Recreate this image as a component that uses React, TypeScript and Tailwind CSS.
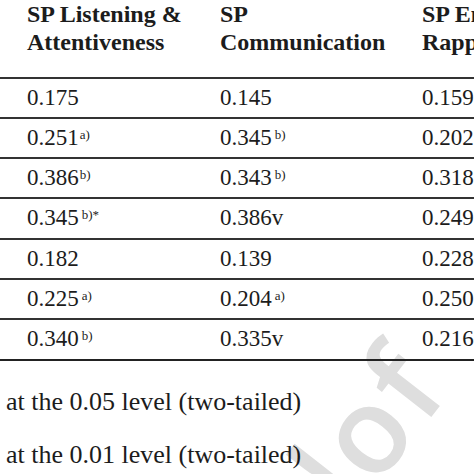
import type { ReactNode } from 'react'

type Cell = { v: string; sup?: string; gap?: boolean }

const ROWS: { h: string; cells: Cell[] }[] = [
  { h: 'h-[40px]', cells: [{ v: '0.175' }, { v: '0.145' }, { v: '0.159' }] },
  { h: 'h-[40px]', cells: [{ v: '0.251', sup: 'a)' }, { v: '0.345', sup: 'b)', gap: true }, { v: '0.202' }] },
  { h: 'h-[40px]', cells: [{ v: '0.386', sup: 'b)' }, { v: '0.343', sup: 'b)', gap: true }, { v: '0.318' }] },
  { h: 'h-[41px]', cells: [{ v: '0.345', sup: 'b)*', gap: true }, { v: '0.386v' }, { v: '0.249' }] },
  { h: 'h-[40px]', cells: [{ v: '0.182' }, { v: '0.139' }, { v: '0.228' }] },
  { h: 'h-[40px]', cells: [{ v: '0.225', sup: 'a)', gap: true }, { v: '0.204', sup: 'a)', gap: true }, { v: '0.250' }] },
  { h: 'h-[41px]', cells: [{ v: '0.340', sup: 'b)', gap: true }, { v: '0.335v' }, { v: '0.216' }] },
]

const Value = ({ cell }: { cell: Cell }) => (
  <>
    {cell.v}
    {cell.sup && <sup className={cell.gap ? 'ml-[3px] text-[13px]' : 'ml-[1px] text-[13px]'}>{cell.sup}</sup>}
  </>
)

const Row = ({ h, children }: { h: string; children: ReactNode[] }) => (
  <div className={`flex ${h} border-t-2 border-[#333] text-[23px] leading-[38px]`}>
    <div className="w-[220px] shrink-0 pl-[27px]">{children[0]}</div>
    <div className="w-[202px] shrink-0">{children[1]}</div>
    <div className="shrink-0 whitespace-nowrap">{children[2]}</div>
  </div>
)

export default function App() {
  return (
    <div className="relative h-[474px] w-[474px] overflow-hidden bg-white font-['Liberation_Serif',serif] text-[#1c1c1c]">
      {/* watermark */}
      <span className="pointer-events-none absolute left-[250px] top-[380px] w-[210px] -rotate-52 whitespace-nowrap font-['Open_Sans',sans-serif] text-[120px] font-semibold leading-none tracking-[0.04em] text-[#dedede]">
        dof
      </span>

      <div className="relative">
        <div className="flex h-[77px] text-[24px] font-bold leading-[28px]">
          <div className="w-[220px] shrink-0 pl-[27px]">
            SP Listening &amp;
            <br />
            Attentiveness
          </div>
          <div className="w-[202px] shrink-0">
            SP
            <br />
            Communication
          </div>
          <div className="shrink-0 whitespace-nowrap">
            SP Empathy &amp;
            <br />
            Rapport
          </div>
        </div>

        {ROWS.map((row, i) => (
          <Row key={i} h={row.h}>
            {row.cells.map((c, j) => (
              <Value key={j} cell={c} />
            ))}
          </Row>
        ))}
        <div className="border-t-2 border-[#222]" />

        <div className="mt-[14px] whitespace-nowrap pl-[6px] text-[26px] leading-[53px]">
          <p>at the 0.05 level (two-tailed)</p>
          <p>at the 0.01 level (two-tailed)</p>
        </div>
      </div>
    </div>
  )
}
